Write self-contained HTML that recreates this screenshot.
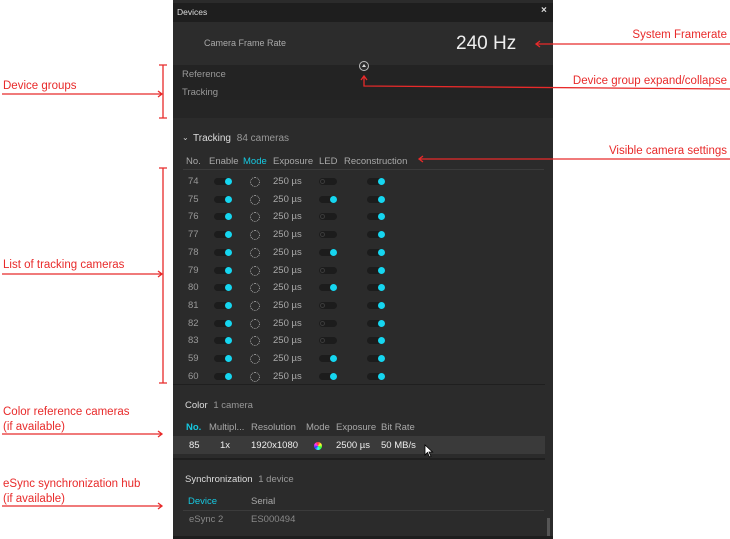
<!DOCTYPE html>
<html><head><meta charset="utf-8"><style>
*{margin:0;padding:0;box-sizing:border-box}
body{width:730px;height:539px;background:#fff;position:relative;overflow:hidden;font-family:"Liberation Sans",sans-serif}
.p{position:absolute;left:173px;top:0;width:380px;height:539px;background:#2b2b2b}
.a{position:absolute;white-space:nowrap}
.t{color:#a8a8a8;font-size:9.5px}
.r{color:#e82a2a;font-size:11.5px;position:absolute;white-space:nowrap}
.rr{right:3px;text-align:right}
.tg{position:absolute;width:18px;height:7px;border-radius:4px;background:#1c1c1c}
.tg i{position:absolute;top:0;width:7px;height:7px;border-radius:50%}
.on i{right:0;background:#16d6f0}
.off i{left:1px;top:1px;width:5px;height:5px;border:1px solid #3c3c3c;background:#1c1c1c}
.m{position:absolute;width:10px;height:10px;border:1.5px dotted #aaa;border-radius:50%}
</style></head><body>
<div class="p">
 <div class="a" style="left:0;top:3px;width:380px;height:19px;background:#1e1e1e"></div>
 <div class="a" style="left:4px;top:7px;color:#ddd;font-size:8.5px">Devices</div>
 <div class="a" style="left:368px;top:5px;color:#ddd;font-size:10px;font-weight:bold">×</div>
 <div class="a" style="left:0;top:22px;width:380px;height:43px;background:#2c2c2c"></div>
 <div class="a" style="left:31px;top:38px;color:#aaa;font-size:9px">Camera Frame Rate</div>
 <div class="a" style="left:283px;top:33px;color:#eee;font-size:19px">240 Hz</div>
 <div class="a" style="left:0;top:65px;width:380px;height:35px;background:#232323"></div>
 <div class="a" style="left:0;top:100px;width:380px;height:18px;background:#252525"></div>
 <div class="a" style="left:9px;top:69px;color:#999;font-size:9.5px">Reference</div>
 <div class="a" style="left:9px;top:87px;color:#999;font-size:9.5px">Tracking</div>
 <div class="a" style="left:186px;top:61px;width:10px;height:10px;border:1px solid #bbb;border-radius:50%;background:#2c2c2c"></div>
 <div class="a" style="left:189px;top:64px;width:0;height:0;border-left:2px solid transparent;border-right:2px solid transparent;border-bottom:3px solid #ddd"></div>
 <div class="a" style="left:9px;top:133px;color:#ccc;font-size:8px">⌄</div>
 <div class="a" style="left:20px;top:133px;color:#ddd;font-size:10px">Tracking <span style="color:#999;margin-left:3px">84 cameras</span></div>
 <div class="a t" style="left:13px;top:156px">No.</div>
 <div class="a t" style="left:36px;top:156px">Enable</div>
 <div class="a t" style="left:70px;top:156px;color:#16c8e0">Mode</div>
 <div class="a t" style="left:100px;top:156px">Exposure</div>
 <div class="a t" style="left:146px;top:156px">LED</div>
 <div class="a t" style="left:171px;top:156px">Reconstruction</div>
 <div class="a" style="left:10px;top:169px;width:361px;height:1px;background:#3b3b3b"></div>
 <div id="rows"></div>
 <div class="a" style="left:0;top:384px;width:372px;height:1px;background:#1f1f1f"></div>
 <div class="a" style="left:12px;top:400px;color:#ddd;font-size:9.5px">Color <span style="color:#999;margin-left:3px">1 camera</span></div>
 <div class="a t" style="left:13px;top:422px;color:#16c8e0;font-weight:bold">No.</div>
 <div class="a t" style="left:36px;top:422px">Multipl...</div>
 <div class="a t" style="left:78px;top:422px">Resolution</div>
 <div class="a t" style="left:133px;top:422px">Mode</div>
 <div class="a t" style="left:163px;top:422px">Exposure</div>
 <div class="a t" style="left:208px;top:422px">Bit Rate</div>
 <div class="a" style="left:0;top:436px;width:372px;height:18px;background:#3a3a3a"></div>
 <div class="a" style="left:16px;top:440px;color:#eee;font-size:9.5px">85</div>
 <div class="a" style="left:47px;top:440px;color:#eee;font-size:9.5px">1x</div>
 <div class="a" style="left:78px;top:440px;color:#eee;font-size:9.5px">1920x1080</div>
 <div class="a" style="left:141px;top:442px;width:8px;height:8px;border-radius:50%;background:conic-gradient(#f33,#ff3,#3f3,#3ff,#33f,#f3f,#f33)"></div>
 <div class="a" style="left:163px;top:440px;color:#eee;font-size:9.5px">2500 µs</div>
 <div class="a" style="left:208px;top:440px;color:#eee;font-size:9.5px">50 MB/s</div>
 <svg class="a" style="left:251px;top:444px" width="10" height="14"><path d="M1 1 L1 11 L3.5 8.5 L5.5 13 L7 12.3 L5 8 L8.5 8 Z" fill="#fff" stroke="#000" stroke-width=".8"/></svg>
 <div class="a" style="left:0;top:458px;width:372px;height:2px;background:#1f1f1f"></div>
 <div class="a" style="left:12px;top:474px;color:#ddd;font-size:9.5px">Synchronization <span style="color:#999;margin-left:3px">1 device</span></div>
 <div class="a t" style="left:15px;top:496px;color:#16c8e0">Device</div>
 <div class="a t" style="left:78px;top:496px">Serial</div>
 <div class="a" style="left:10px;top:510px;width:361px;height:1px;background:#3b3b3b"></div>
 <div class="a t" style="left:16px;top:514px;color:#888">eSync 2</div>
 <div class="a t" style="left:78px;top:514px;color:#888">ES000494</div>
 <div class="a" style="left:374px;top:518px;width:3px;height:18px;background:#555"></div>
 <div class="a" style="left:0;top:536px;width:380px;height:3px;background:#1e1e1e"></div>
</div>
<div class="r" style="left:3px;top:80px">Device groups</div>
<div class="r" style="left:3px;top:259px">List of tracking cameras</div>
<div class="r" style="left:3px;top:405px;line-height:15px">Color reference cameras<br>(if available)</div>
<div class="r" style="left:3px;top:477px;line-height:15px">eSync synchronization hub<br>(if available)</div>
<div class="r rr" style="top:29px">System Framerate</div>
<div class="r rr" style="top:75px">Device group expand/collapse</div>
<div class="r rr" style="top:145px">Visible camera settings</div>
<svg class="a" style="left:0;top:0" width="730" height="539">
<g stroke="#e82a2a" stroke-width="1.3" fill="none">
<path d="M2 94H162M158 91L162 94L158 97"/>
<path d="M163 65V118M159 65H167M159 118H167"/>
<path d="M2 274H162M158 271L162 274L158 277"/>
<path d="M163 168V383M159 168H167M159 383H167"/>
<path d="M2 434H162M158 431L162 434L158 437"/>
<path d="M2 506H162M158 503L162 506L158 509"/>
<path d="M536 44H730M540 41L536 44L540 47"/>
<path d="M730 89L364 86V76M361 80L364 76L367 80"/>
<path d="M419 159H730M423 156L419 159L423 162"/>
</g></svg>
<script>
var nums=[74,75,76,77,78,79,80,81,82,83,59,60],led=[0,1,0,0,1,0,1,0,0,0,1,1],h='';
nums.forEach(function(n,i){var y=176+i*17.7;
h+='<div class="a" style="left:15px;top:'+y+'px;color:#999;font-size:9.5px">'+n+'</div>';
h+='<div class="tg on" style="left:41px;top:'+(y+2)+'px"><i></i></div>';
h+='<div class="m" style="left:77px;top:'+(y+1)+'px"></div>';
h+='<div class="a" style="left:100px;top:'+y+'px;color:#aaa;font-size:9.5px">250 µs</div>';
h+='<div class="tg '+(led[i]?'on':'off')+'" style="left:146px;top:'+(y+2)+'px"><i></i></div>';
h+='<div class="tg on" style="left:194px;top:'+(y+2)+'px"><i></i></div>';});
document.getElementById('rows').innerHTML=h;
</script>
</body></html>
